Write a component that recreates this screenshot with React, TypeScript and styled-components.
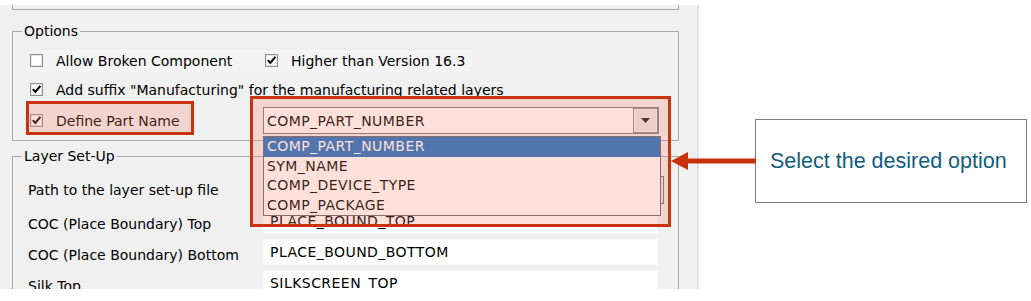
import React from "react";
import styled, { createGlobalStyle } from "styled-components";

const Global = createGlobalStyle`
  html, body { margin: 0; padding: 0; background: #ffffff; }
  body { font-family: "DejaVu Sans", Tahoma, sans-serif; }
`;

const Page = styled.div`
  display: flex;
  width: 1031px;
  height: 301px;
  background: #ffffff;
  overflow: hidden;
`;

const Dialog = styled.div`
  width: 699px;
  height: 284px;
  margin-top: 5px;
  box-sizing: border-box;
  background: #f0f0f0;
  border-right: 2px solid #d9e5f3;
  padding: 0 18px 0 12px;
  display: flex;
  flex-direction: column;
  overflow: hidden;
  font-family: "DejaVu Sans", Tahoma, sans-serif;
  font-size: 14px;
  color: #000;
  flex-shrink: 0;
`;

const PrevGroup = styled.div`
  height: 5px;
  box-sizing: border-box;
  border: 1px solid #a7a7a7;
  border-top: none;
  flex-shrink: 0;
`;

const Group = styled.fieldset<{ $top: number; $pt: number; $pl: number; $pb: number }>`
  margin: ${(p) => p.$top}px 0 0 0;
  padding: ${(p) => p.$pt}px 0 ${(p) => p.$pb}px ${(p) => p.$pl}px;
  border: 1px solid #a9a9a9;
  min-width: 0;
  flex-shrink: 0;
`;

const Legend = styled.legend<{ $ml: number }>`
  margin-left: ${(p) => p.$ml}px;
  padding: 0 2px;
  line-height: 17px;
  font-size: 14px;
`;

const Row = styled.div<{ $h: number }>`
  display: flex;
  align-items: center;
  height: ${(p) => p.$h}px;
`;

const CheckItem = styled.label<{ $w?: number; $plain?: boolean }>`
  position: relative;
  display: flex;
  align-items: center;
  gap: 13px;
  height: 22px;
  padding-right: 8px;
  ${(p) => (p.$w ? `width: ${p.$w}px; padding-right: 0;` : "")}
  background: ${(p) => (p.$plain ? "transparent" : "#f4f4f4")};
  white-space: nowrap;
  align-self: center;
`;

const Box = styled.span`
  width: 13px;
  height: 13px;
  box-sizing: border-box;
  border: 1px solid #8e8f8f;
  background: #ffffff;
  box-shadow: inset 0 0 0 1px #e6e6e6;
  display: flex;
  align-items: center;
  justify-content: center;
  flex-shrink: 0;
`;

const Highlight = styled.div<{ $l: number; $t: number; $w: number; $h: number }>`
  position: absolute;
  left: ${(p) => p.$l}px;
  top: ${(p) => p.$t}px;
  width: ${(p) => p.$w}px;
  height: ${(p) => p.$h}px;
  box-sizing: border-box;
  border: 3px solid #c9340f;
  background: rgba(247, 131, 103, 0.25);
  z-index: 5;
  pointer-events: none;
`;

const Combo = styled.div`
  position: relative;
  width: 396px;
  height: 27px;
  box-sizing: border-box;
  border: 1px solid #7a7a7a;
  background: #ffffff;
  display: flex;
  align-items: center;
`;

const ComboText = styled.span`
  flex: 1;
  padding-left: 3px;
  white-space: nowrap;
  letter-spacing: 0.45px;
`;

const ComboButton = styled.span`
  width: 25px;
  height: 25px;
  box-sizing: border-box;
  border: 1px solid #8c8c8c;
  background: #e8e8e8;
  box-shadow: inset 0 0 0 1px #f6f6f6;
  display: flex;
  align-items: center;
  justify-content: center;
`;

const List = styled.div`
  position: absolute;
  left: -1px;
  top: 28px;
  width: 398px;
  box-sizing: border-box;
  border: 1px solid #666666;
  background: #ffffff;
  z-index: 4;
`;

const ListItem = styled.div<{ $sel?: boolean }>`
  height: 19.5px;
  line-height: 19.5px;
  padding-left: 3px;
  letter-spacing: 0.45px;
  background: ${(p) => (p.$sel ? "#1c70c4" : "#ffffff")};
  color: ${(p) => (p.$sel ? "#ffffff" : "#000000")};
  white-space: nowrap;
`;

const FieldRow = styled.div<{ $h: number }>`
  display: flex;
  align-items: flex-start;
  height: ${(p) => p.$h}px;
`;

const FieldLabel = styled.span<{ $dy: number }>`
  width: 235px;
  line-height: 26px;
  padding-top: ${(p) => p.$dy}px;
  white-space: nowrap;
  flex-shrink: 0;
`;

const Field = styled.div<{ $w: number }>`
  width: ${(p) => p.$w}px;
  height: 26px;
  box-sizing: border-box;
  border: 1px solid #f8f8f8;
  background: #ffffff;
  padding-left: 6px;
  line-height: 24px;
  letter-spacing: 0.45px;
  white-space: nowrap;
  overflow: hidden;
`;

const BrowseButton = styled.span`
  width: 31px;
  height: 28px;
  margin-left: 4px;
  margin-top: -1px;
  box-sizing: border-box;
  border: 1px solid #707070;
  background: #e6e6e6;
`;

const Annotations = styled.div`
  flex: 1;
  padding: 119px 0 0 56px;
`;

const Callout = styled.div`
  position: relative;
  width: 272px;
  height: 84px;
  box-sizing: border-box;
  border: 1px solid #7f7f7f;
  background: #ffffff;
  display: flex;
  align-items: center;
  padding-left: 14px;
  font-family: "Liberation Sans", Arial, sans-serif;
  font-size: 21.5px;
  color: #115e7d;
  white-space: nowrap;
`;

const Arrow = styled.svg`
  position: absolute;
  left: -85px;
  top: 31px;
`;

const Check = () => (
  <svg width="11" height="11" viewBox="0 0 11 11">
    <path d="M1.8 5.2 L4.3 8 L9.4 1.8" fill="none" stroke="#000" strokeWidth="2" />
  </svg>
);

const Tri = () => (
  <svg width="9" height="5" viewBox="0 0 9 5">
    <path d="M0 0 H9 L4.5 5 Z" fill="#1a1a1a" />
  </svg>
);

export default function App() {
  return (
    <>
      <Global />
      <Page>
        <Dialog>
          <PrevGroup />
          <Group $top={13} $pt={6} $pl={17} $pb={3}>
            <Legend $ml={-8}>Options</Legend>
            <Row $h={29}>
              <CheckItem $w={235}>
                <Box />
                <span>Allow Broken Component</span>
              </CheckItem>
              <CheckItem>
                <Box>
                  <Check />
                </Box>
                <span>Higher than Version 16.3</span>
              </CheckItem>
            </Row>
            <Row $h={29}>
              <CheckItem $plain>
                <Box>
                  <Check />
                </Box>
                <span>Add suffix "Manufacturing" for the manufacturing related layers</span>
              </CheckItem>
            </Row>
            <Row $h={33}>
              <CheckItem $w={233} $plain>
                <Box>
                  <Check />
                </Box>
                <span>Define Part Name</span>
                <Highlight $l={-4} $t={-9} $w={168} $h={34} />
              </CheckItem>
              <Combo>
                <ComboText>COMP_PART_NUMBER</ComboText>
                <ComboButton>
                  <Tri />
                </ComboButton>
                <List>
                  <ListItem $sel>COMP_PART_NUMBER</ListItem>
                  <ListItem>SYM_NAME</ListItem>
                  <ListItem>COMP_DEVICE_TYPE</ListItem>
                  <ListItem>COMP_PACKAGE</ListItem>
                </List>
                <Highlight $l={-14} $t={-12} $w={421} $h={131} />
              </Combo>
            </Row>
          </Group>
          <Group $top={7} $pt={12} $pl={15} $pb={0}>
            <Legend $ml={-6}>Layer Set-Up</Legend>
            <FieldRow $h={31}>
              <FieldLabel $dy={0}>Path to the layer set-up file</FieldLabel>
              <Field $w={366} />
              <BrowseButton />
            </FieldRow>
            <FieldRow $h={31}>
              <FieldLabel $dy={3}>COC (Place Boundary) Top</FieldLabel>
              <Field $w={395}>PLACE_BOUND_TOP</Field>
            </FieldRow>
            <FieldRow $h={31}>
              <FieldLabel $dy={3}>COC (Place Boundary) Bottom</FieldLabel>
              <Field $w={395}>PLACE_BOUND_BOTTOM</Field>
            </FieldRow>
            <FieldRow $h={31}>
              <FieldLabel $dy={3}>Silk Top</FieldLabel>
              <Field $w={395}>SILKSCREEN_TOP</Field>
            </FieldRow>
          </Group>
        </Dialog>
        <Annotations>
          <Callout>
            Select the desired option
            <Arrow width="85" height="20" viewBox="0 0 85 20">
              <path d="M0 10 L17 1 L17 19 Z" fill="#c9300c" />
              <rect x="15" y="7.5" width="70" height="5" fill="#c9300c" />
            </Arrow>
          </Callout>
        </Annotations>
      </Page>
    </>
  );
}
